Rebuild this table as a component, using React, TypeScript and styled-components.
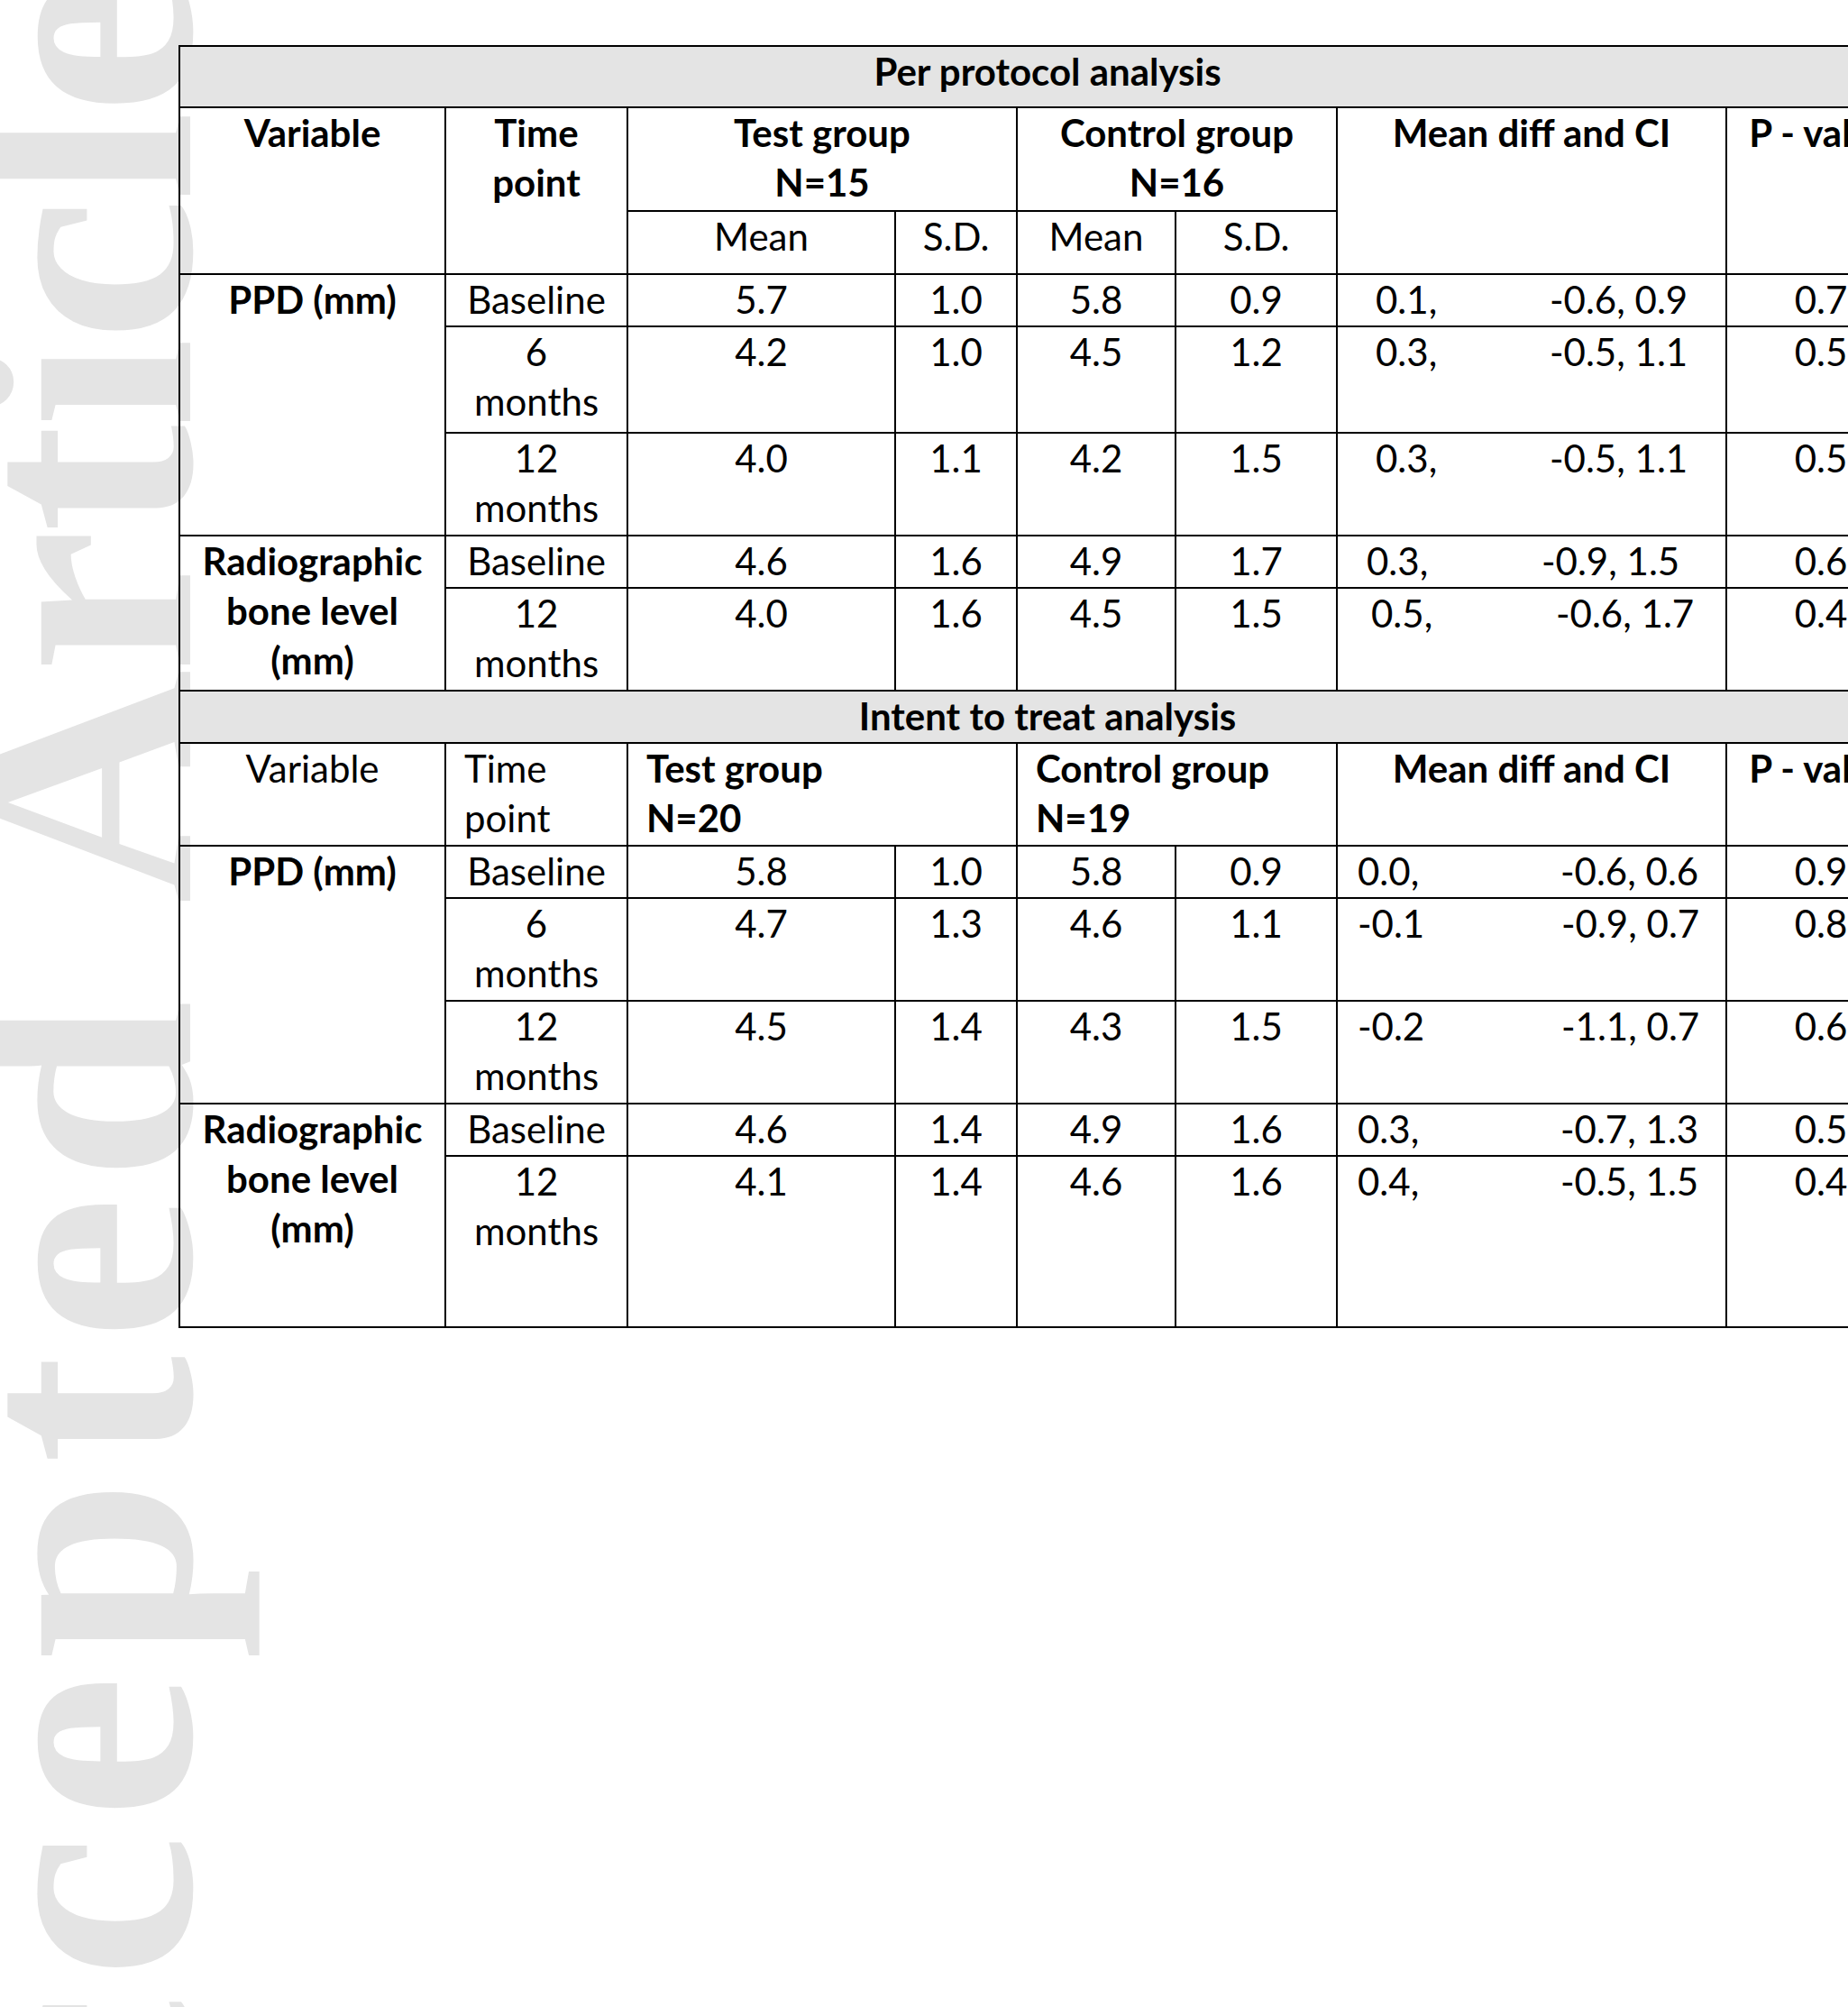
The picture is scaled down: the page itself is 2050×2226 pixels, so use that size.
import React from 'react';
import styled, { createGlobalStyle } from 'styled-components';

// One measured row of the results table
interface DataRow {
  time: string;
  tMean: string;
  tSd: string;
  cMean: string;
  cSd: string;
  diff: string;
  ci: string;
  p: string;
  h: number;
  lead: number;
  tab: number;
}

interface Group {
  variable: string;
  rows: DataRow[];
}

const GlobalStyle = createGlobalStyle`
  html, body {
    margin: 0;
    padding: 0;
    background: #fff;
    overflow: hidden;
  }
  body {
    font-family: Lato, "Liberation Sans", sans-serif;
  }
`;

const Page = styled.div`
  position: relative;
  width: 2050px;
  height: 2226px;
  overflow: hidden;
  box-sizing: border-box;
  padding: 50px 0 0 198px;
`;

// vertical "Accepted Article" stamp running up the left edge
const Watermark = styled.div`
  position: absolute;
  left: -90px;
  top: 2648px;
  transform-origin: 0 0;
  transform: rotate(-90deg);
  font-family: "Liberation Serif", "Times New Roman", serif;
  font-weight: 700;
  font-size: 360px;
  line-height: 360px;
  color: #e4e4e4;
  white-space: nowrap;
  user-select: none;
  pointer-events: none;
`;

const Word = styled.span<{ $spacing: number }>`
  letter-spacing: ${(p) => p.$spacing}px;
`;

const Table = styled.table`
  position: relative;
  border-collapse: collapse;
  table-layout: fixed;
  width: 1926px;
  font-family: Lato, "Liberation Sans", sans-serif;
  font-size: 42px;
  line-height: 55px;
  color: #000;
`;

const Row = styled.tr<{ $h: number }>`
  height: ${(p) => p.$h}px;
`;

const Cell = styled.td<{ $align?: 'left' | 'center'; $bold?: boolean }>`
  border: 2px solid #000;
  padding: 0 20px;
  vertical-align: top;
  text-align: ${(p) => p.$align ?? 'center'};
  font-weight: ${(p) => (p.$bold ? 700 : 400)};
  white-space: pre-line;
  overflow: hidden;
`;

const Band = styled.td`
  border: 2px solid #000;
  padding: 0;
  vertical-align: top;
  text-align: center;
  font-weight: 700;
  background: #e4e4e4;
`;

const CiCell = styled.td<{ $lead: number }>`
  border: 2px solid #000;
  padding: 0 0 0 ${(p) => p.$lead}px;
  vertical-align: top;
  white-space: nowrap;
`;

const Lead = styled.span<{ $w: number }>`
  display: inline-block;
  width: ${(p) => p.$w}px;
`;

const widths = [295, 202, 297, 135, 176, 179, 432, 210];

const perProtocol: Group[] = [
  {
    variable: 'PPD (mm)',
    rows: [
      { time: 'Baseline', tMean: '5.7', tSd: '1.0', cMean: '5.8', cSd: '0.9', diff: '0.1,', ci: '-0.6, 0.9', p: '0.7', h: 58, lead: 42, tab: 193 },
      { time: '6\nmonths', tMean: '4.2', tSd: '1.0', cMean: '4.5', cSd: '1.2', diff: '0.3,', ci: '-0.5, 1.1', p: '0.5', h: 118, lead: 42, tab: 193 },
      { time: '12\nmonths', tMean: '4.0', tSd: '1.1', cMean: '4.2', cSd: '1.5', diff: '0.3,', ci: '-0.5, 1.1', p: '0.5', h: 114, lead: 42, tab: 193 },
    ],
  },
  {
    variable: 'Radiographic\nbone level\n(mm)',
    rows: [
      { time: 'Baseline', tMean: '4.6', tSd: '1.6', cMean: '4.9', cSd: '1.7', diff: '0.3,', ci: '-0.9, 1.5', p: '0.6', h: 58, lead: 32, tab: 194 },
      { time: '12\nmonths', tMean: '4.0', tSd: '1.6', cMean: '4.5', cSd: '1.5', diff: '0.5,', ci: '-0.6, 1.7', p: '0.4', h: 114, lead: 37, tab: 205 },
    ],
  },
];

const intentToTreat: Group[] = [
  {
    variable: 'PPD (mm)',
    rows: [
      { time: 'Baseline', tMean: '5.8', tSd: '1.0', cMean: '5.8', cSd: '0.9', diff: '0.0,', ci: '-0.6, 0.6', p: '0.9', h: 58, lead: 22, tab: 225 },
      { time: '6\nmonths', tMean: '4.7', tSd: '1.3', cMean: '4.6', cSd: '1.1', diff: '-0.1', ci: '-0.9, 0.7', p: '0.8', h: 114, lead: 22, tab: 226 },
      { time: '12\nmonths', tMean: '4.5', tSd: '1.4', cMean: '4.3', cSd: '1.5', diff: '-0.2', ci: '-1.1, 0.7', p: '0.6', h: 114, lead: 22, tab: 226 },
    ],
  },
  {
    variable: 'Radiographic\nbone level\n(mm)',
    rows: [
      { time: 'Baseline', tMean: '4.6', tSd: '1.4', cMean: '4.9', cSd: '1.6', diff: '0.3,', ci: '-0.7, 1.3', p: '0.5', h: 58, lead: 22, tab: 225 },
      { time: '12\nmonths', tMean: '4.1', tSd: '1.4', cMean: '4.6', cSd: '1.6', diff: '0.4,', ci: '-0.5, 1.5', p: '0.4', h: 190, lead: 22, tab: 225 },
    ],
  },
];

const renderGroups = (groups: Group[], key: string) =>
  groups.map((g) =>
    g.rows.map((r, i) => (
      <Row $h={r.h} key={`${key}-${g.variable}-${r.time}`}>
        {i === 0 && (
          <Cell $bold rowSpan={g.rows.length}>
            {g.variable}
          </Cell>
        )}
        <Cell>{r.time}</Cell>
        <Cell>{r.tMean}</Cell>
        <Cell>{r.tSd}</Cell>
        <Cell>{r.cMean}</Cell>
        <Cell>{r.cSd}</Cell>
        <CiCell $lead={r.lead}>
          <Lead $w={r.tab}>{r.diff}</Lead>
          {r.ci}
        </CiCell>
        <Cell>{r.p}</Cell>
      </Row>
    ))
  );

const App: React.FC = () => (
  <>
    <GlobalStyle />
    <Page>
      <Watermark>
        <Word $spacing={17}>Accepted</Word> <Word $spacing={-4}>Article</Word>
      </Watermark>
      <Table>
        <colgroup>
          {widths.map((w, i) => (
            <col key={i} style={{ width: w }} />
          ))}
        </colgroup>
        <tbody>
          <Row $h={68}>
            <Band colSpan={8}>Per protocol analysis</Band>
          </Row>
          <Row $h={115}>
            <Cell $bold rowSpan={2}>Variable</Cell>
            <Cell $bold rowSpan={2}>{'Time\npoint'}</Cell>
            <Cell $bold colSpan={2}>{'Test group\nN=15'}</Cell>
            <Cell $bold colSpan={2}>{'Control group\nN=16'}</Cell>
            <Cell $bold rowSpan={2}>Mean diff and CI</Cell>
            <Cell $bold rowSpan={2}>P - value</Cell>
          </Row>
          <Row $h={70}>
            <Cell>Mean</Cell>
            <Cell>S.D.</Cell>
            <Cell>Mean</Cell>
            <Cell>S.D.</Cell>
          </Row>
          {renderGroups(perProtocol, 'pp')}
          <Row $h={58}>
            <Band colSpan={8}>Intent to treat analysis</Band>
          </Row>
          <Row $h={114}>
            <Cell>Variable</Cell>
            <Cell $align="left">{'Time\npoint'}</Cell>
            <Cell $bold $align="left" colSpan={2}>{'Test group\nN=20'}</Cell>
            <Cell $bold $align="left" colSpan={2}>{'Control group\nN=19'}</Cell>
            <Cell $bold>Mean diff and CI</Cell>
            <Cell $bold>P - value</Cell>
          </Row>
          {renderGroups(intentToTreat, 'itt')}
        </tbody>
      </Table>
    </Page>
  </>
);

export default App;
